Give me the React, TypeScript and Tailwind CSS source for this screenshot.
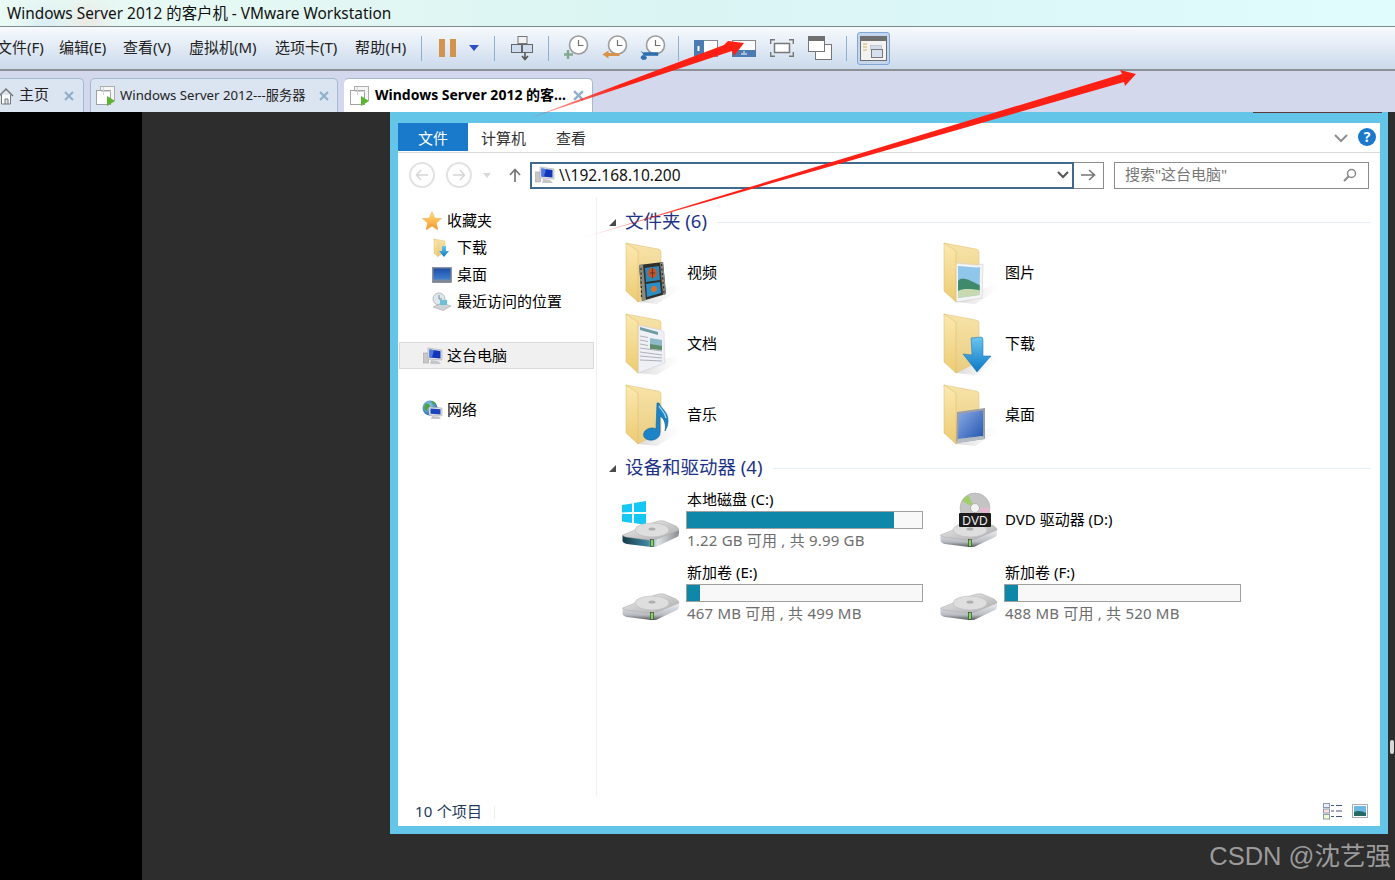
import React from "react";

const Sep = ({ ml }: { ml: string }) => <div className={`w-px h-[25px] bg-[#8fb0cf] shrink-0 ${ml}`} />;

const TabX = ({ size }: { size: number }) => (
  <svg width={size} height={size} viewBox="0 0 10 10" className="shrink-0">
    <path d="M1 1l8 8M9 1l-8 8" stroke="#8fb0cc" strokeWidth="2.200" />
  </svg>
);

function Defs() {
  return (
    <svg className="absolute w-0 h-0" aria-hidden="true">
      <defs>
        <linearGradient id="flap" x1="0" y1="0" x2="0" y2="1">
          <stop offset="0" stopColor="#fbe9b0" />
          <stop offset="1" stopColor="#eccb73" />
        </linearGradient>
        <linearGradient id="back" x1="0" y1="0" x2="0" y2="1">
          <stop offset="0" stopColor="#f7e3a8" />
          <stop offset="1" stopColor="#e9cc80" />
        </linearGradient>
        <linearGradient id="shadow" x1="0" y1="0" x2="1" y2="0">
          <stop offset="0" stopColor="#999" stopOpacity="0.55" />
          <stop offset="1" stopColor="#ccc" stopOpacity="0" />
        </linearGradient>
        <linearGradient id="silver" x1="0" y1="0" x2="1" y2="1">
          <stop offset="0" stopColor="#f2f2f2" />
          <stop offset="1" stopColor="#a8a8a8" />
        </linearGradient>
        <linearGradient id="side" x1="0" y1="0" x2="0" y2="1">
          <stop offset="0" stopColor="#eceef2" />
          <stop offset="0.7" stopColor="#b9bcc2" />
          <stop offset="1" stopColor="#55585c" />
        </linearGradient>
        <linearGradient id="sideC" x1="0" y1="0" x2="1" y2="0">
          <stop offset="0" stopColor="#173a47" />
          <stop offset="0.45" stopColor="#3f86a0" />
          <stop offset="0.62" stopColor="#dfe3e8" />
          <stop offset="1" stopColor="#8a8d90" />
        </linearGradient>
        <linearGradient id="blueArrow" x1="0" y1="0" x2="0" y2="1">
          <stop offset="0" stopColor="#6cc6ee" />
          <stop offset="1" stopColor="#0a78c6" />
        </linearGradient>
        <linearGradient id="screen" x1="0" y1="0" x2="1" y2="1">
          <stop offset="0" stopColor="#8cabe6" />
          <stop offset="1" stopColor="#2456b0" />
        </linearGradient>
        <linearGradient id="screenDark" x1="0" y1="0" x2="0" y2="1">
          <stop offset="0" stopColor="#1d4fa8" />
          <stop offset="1" stopColor="#3f7fd0" />
        </linearGradient>
        <linearGradient id="star" x1="0" y1="0" x2="0" y2="1">
          <stop offset="0" stopColor="#ffe17a" />
          <stop offset="1" stopColor="#f6962b" />
        </linearGradient>
        <linearGradient id="redA" gradientUnits="userSpaceOnUse" x1="530" y1="118" x2="620" y2="86">
          <stop offset="0" stopColor="#ff2a1c" stopOpacity="0.35" />
          <stop offset="1" stopColor="#ff2015" />
        </linearGradient>
        <linearGradient id="redB" gradientUnits="userSpaceOnUse" x1="585" y1="237" x2="700" y2="203">
          <stop offset="0" stopColor="#ff2a1c" stopOpacity="0.3" />
          <stop offset="1" stopColor="#ff2015" />
        </linearGradient>
        <radialGradient id="globe" cx="0.4" cy="0.35" r="0.7">
          <stop offset="0" stopColor="#9ad2f0" />
          <stop offset="1" stopColor="#1b6aa8" />
        </radialGradient>
      </defs>
    </svg>
  );
}

function TabIcon() {
  return (
    <svg width="21" height="21" viewBox="0 0 21 21" className="shrink-0">
      <rect x="5.5" y="1.5" width="14" height="14" fill="#f6f6f6" stroke="#aeaeae" />
      <rect x="1.5" y="5.5" width="14" height="14" fill="#fff" stroke="#a2a2a2" />
      <path d="M8.5 2v8M6 6.5h10" stroke="#d5d5d5" />
      <polygon points="12,11 20,16 12,21" fill="#5cb531" />
    </svg>
  );
}

function Clock({ badge }: { badge: "plus" | "back" | "wrench" }) {
  return (
    <svg width="26" height="26" viewBox="0 0 26 26" className="shrink-0">
      <circle cx="15.5" cy="10" r="9" fill="#fff" stroke="#9c9c9c" strokeWidth="1.6" />
      <path d="M15.5 5v5.5h5" fill="none" stroke="#6f6f6f" strokeWidth="1.2" />
      {badge === "plus" && <path d="M5 15v9M1 19.5h9" stroke="#83a98c" strokeWidth="2.4" />}
      {badge === "back" && <path d="M0.5 19.5l6-4v2.5h11v3h-11v2.5z" fill="#d8934a" />}
      {badge === "wrench" && (
        <path d="M1 16c1 1.5 2 2 3.5 1.5h13.5v3H4.5C3 20 2 20.500 1 22c-.5 2 2 3 4 2.500 1-.4 1.500-1 1.500-1.800 0-1-1-2-2.500-2" fill="#2f6fae" stroke="#2f6fae" strokeWidth="0.6" />
      )}
    </svg>
  );
}

function Folder({ children }: { children?: React.ReactNode }) {
  return (
    <svg width="60" height="71" viewBox="0 0 60 71" className="shrink-0">
      <polygon points="13,65 36,53 52,47 56,52 32,67" fill="url(#shadow)" opacity="0.7" />
      <path d="M1 6L33 12Q36 12.500 36 15V53L13 65Z" fill="url(#back)" stroke="#dcbc6c" strokeWidth="0.5" />
      {children}
      <path d="M1 6L13 14V65L1 54Z" fill="url(#flap)" stroke="#d9b868" strokeWidth="0.5" />
    </svg>
  );
}

const FilmArt = () => (
  <g>
    <polygon points="14,28 38,25 41,57 17,64" fill="#2f2f2b" />
    <polygon points="14,28 18,27.500 21,63 17,64" fill="#8b8a80" />
    <polygon points="35,25.400 38,25 41,57 38,58" fill="#8b8a80" />
    <path d="M16 31l.5 30M36.500 27l2.500 29" stroke="#2f2f2b" strokeWidth="1.200" strokeDasharray="2 2.500" fill="none" />
    <polygon points="20,31 34,29 35,43 21,45" fill="#2f86b5" />
    <polygon points="21,47 35,45 36,56 22,60" fill="#2a8fc8" />
    <ellipse cx="27.500" cy="36" rx="4.500" ry="5" fill="#c8532a" />
    <path d="M25 36h5M27.500 31v10" stroke="#3c2a20" strokeWidth="0.7" />
    <circle cx="29" cy="52" r="3" fill="#d8702c" />
  </g>
);
const DocArt = () => (
  <g>
    <polygon points="13,17 36,22 39,24 40,55 13,65" fill="#eef0f6" stroke="#c9cdd6" strokeWidth="0.5" />
    <polygon points="15,19 33,24 33,27 15,22" fill="#6f9ba3" />
    <polygon points="25,30 37,32 37,42 25,41" fill="#8fb9c8" />
    <polygon points="25,36 37,38 37,42 25,41" fill="#5f8f6a" />
    <path d="M15 28l8 1.500M15 32l8 1.500M15 36l8 1.500M15 40l22 3M15 44l22 3M15 48l22 2M15 52l22 1" stroke="#aeb1ba" strokeWidth="1" />
  </g>
);
const MusicArt = () => (
  <g>
    <path d="M32 24L34 24C36 30 43 32 43 42C43 47 41 50 40 52C41 46 40 40 35 37L35 54C35 59 29 62 24 61C19 60 17 56 20 52C23 49 28 48 31 50Z" fill="#1d84c8" stroke="#0c5e9c" strokeWidth="0.6" />
    <path d="M34 27C36 31 40 33 41 39" fill="none" stroke="#9ad6f5" strokeWidth="1.400" />
  </g>
);
const PicArt = () => (
  <g>
    <polygon points="13,26 34,28 40,27 39,61 13,65" fill="#f4f4f4" stroke="#c8c8c8" strokeWidth="0.5" />
    <polygon points="15,29 34,30.500 37,30 36.500,58 15,61" fill="#8fc6ea" />
    <path d="M15 44C20 38 27 44 36.700 48V54L15 56Z" fill="#3f8a6a" />
    <path d="M15 54C20 51 28 52 36.600 53V58L15 61Z" fill="#c7d9b0" />
  </g>
);
const ArrowArt = () => (
  <path d="M28 30L38 29Q40 29 40 32V48L48 48L34 64L20 46L29 47Z" fill="url(#blueArrow)" stroke="#0e6fb5" strokeWidth="0.5" />
);
const DeskArt = () => (
  <g>
    <polygon points="14,33 42,29 42,60 13,64" fill="#9a9ea6" />
    <polygon points="16,35 40,31.500 40,57 15,60" fill="url(#screen)" />
    <polygon points="15,60 40,57 42,60 13,64" fill="#b5bcc6" />
  </g>
);

function DriveBody({ c }: { c?: boolean }) {
  return (
    <g transform="translate(2,32)">
      <path d="M0.500 16V22Q1 24 5 25L29 28Q33 28.500 36 27L55 18Q57 17 57 14V11L31 21Z" fill={c ? "url(#sideC)" : "url(#side)"} />
      <path d="M0.500 16L33 3Q38 1 42 2L54 7Q57 9 57 11L35 20Q31 21.500 26 21L4 18Q1 17.500 0.500 16Z" fill="url(#silver)" stroke="#a9a9a9" strokeWidth="0.5" />
      <ellipse cx="30" cy="11" rx="17" ry="7" fill="#dedede" stroke="#bbb" strokeWidth="0.6" />
      <ellipse cx="30" cy="10" rx="3.500" ry="1.600" fill="#aeaeae" />
      <rect x="28.500" y="20.500" width="3" height="7" fill="#7ed957" stroke="#333" strokeWidth="0.6" />
    </g>
  );
}
const WinDrive = () => (
  <svg width="60" height="60" viewBox="0 0 60 60" className="shrink-0 self-end mb-[5px]">
    <polygon points="2,18 12,16.500 12,25 2,25.500" fill="#13c8f5" />
    <polygon points="14,16 26,14 26,25 14,25" fill="#13c8f5" />
    <polygon points="2,27 12,27 12,36 2,34.500" fill="#13c8f5" />
    <polygon points="14,27 26,27 26,38 14,36" fill="#13c8f5" />
    <DriveBody c />
  </svg>
);
const PlainDrive = () => (
  <svg width="60" height="60" viewBox="0 0 60 60" className="shrink-0 self-end mb-[5px]">
    <DriveBody />
  </svg>
);
const DvdDrive = () => (
  <svg width="60" height="60" viewBox="0 0 60 60" className="shrink-0 self-end mb-[5px]">
    <DriveBody />
    <circle cx="37" cy="21" r="15" fill="#c4c4c4" stroke="#a5a5a5" strokeWidth="0.5" />
    <path d="M37 21L24 14A15 15 0 0 1 30 8Z" fill="#9fce6a" />
    <path d="M37 21L50 29A15 15 0 0 0 52 21Z" fill="#e6b8d0" />
    <circle cx="37" cy="21" r="4.500" fill="#f2f2f2" stroke="#999" strokeWidth="0.6" />
    <rect x="21" y="26" width="32" height="14" rx="1" fill="#1b1b1b" />
    <text x="37" y="37.500" textAnchor="middle" fontSize="12" fill="#eee" fontFamily="Liberation Sans, sans-serif">DVD</text>
  </svg>
);

const Computer = () => (
  <svg width="20" height="18" viewBox="0 0 20 18" className="shrink-0">
    <rect x="0.500" y="6" width="5" height="10" fill="#c8c8c8" stroke="#999" strokeWidth="0.5" />
    <polygon points="5,1 19,3 19,13 5,12" fill="#e2e4e8" stroke="#9a9a9a" strokeWidth="0.5" />
    <polygon points="6.500,2.500 17.500,4 17.500,11.500 6.500,10.500" fill="#1336b8" />
    <polygon points="6.500,2.500 11,3 9,10.800 6.500,10.500" fill="#4f78df" />
    <path d="M8 13l7 1 3 3H7z" fill="#c4c6ca" />
  </svg>
);
const SmallFolderDl = () => (
  <svg width="18" height="20" viewBox="0 0 18 20" className="shrink-0">
    <path d="M1 1L12 3V15L5 18Z" fill="url(#back)" stroke="#d6b86e" strokeWidth="0.4" />
    <path d="M1 1L5 4V19L1 15Z" fill="url(#flap)" stroke="#d6b86e" strokeWidth="0.4" />
    <path d="M9 8h4v5h3l-5 6-5-6h3z" fill="url(#blueArrow)" />
  </svg>
);
const SmallDesk = () => (
  <svg width="20" height="16" viewBox="0 0 20 16" className="shrink-0">
    <rect x="0.500" y="0.500" width="19" height="15" fill="#7d8796" stroke="#5f6672" strokeWidth="0.5" />
    <rect x="1.500" y="1.500" width="17" height="11" fill="url(#screenDark)" />
  </svg>
);
const Recent = () => (
  <svg width="20" height="19" viewBox="0 0 20 19" className="shrink-0">
    <circle cx="7" cy="7" r="6" fill="#dfe7ea" stroke="#a5aeb3" strokeWidth="0.8" />
    <path d="M7 3v4h3" stroke="#6a8fa0" fill="none" />
    <path d="M1 15l9-4 9 3-8 4.500z" fill="#d0d2d6" stroke="#9a9a9a" strokeWidth="0.5" />
    <rect x="8" y="8" width="7" height="5" fill="#6ac2d8" />
  </svg>
);
const NetIcon = () => (
  <svg width="21" height="20" viewBox="0 0 21 20" className="shrink-0">
    <circle cx="8" cy="8" r="7.500" fill="url(#globe)" />
    <path d="M3 4c3-1 5 0 5 2s-3 2-3 4-2 1-3-2zM9 1c2 0 4 1 5 3l-3 1z" fill="#4fa24a" />
    <polygon points="7,7 20,8 20,16 7,15" fill="#e2e4e8" stroke="#9a9a9a" strokeWidth="0.5" />
    <polygon points="8.500,8.500 18.500,9.200 18.500,14.500 8.500,13.800" fill="#1c44bb" />
    <path d="M10 16l7 .5 2 2.500H9z" fill="#c4c6ca" />
  </svg>
);
const Star = () => (
  <svg width="20" height="20" viewBox="0 0 20 20" className="shrink-0">
    <polygon points="10,0.500 12.800,7 19.500,7.600 14.400,12 16,19 10,15.200 4,19 5.600,12 0.500,7.600 7.200,7" fill="url(#star)" stroke="#e9a548" strokeWidth="0.4" />
  </svg>
);

function FolderCell({ label, children }: { label: string; children?: React.ReactNode }) {
  return (
    <div className="h-[71px] flex items-center pl-[5px]">
      <Folder>{children}</Folder>
      <span className="ml-[2px] text-black">{label}</span>
    </div>
  );
}

function DriveCell({ icon, name, fill, free }: { icon: React.ReactNode; name: string; fill: string; free: string }) {
  return (
    <div className="h-[63px] flex">
      {icon}
      <div className="ml-[7px] flex flex-col">
        <div className="h-[22px] leading-[20px] text-black">{name}</div>
        <div className="-ml-px w-[237px] h-[18px] border border-[#a0a0a0] bg-[#f8f8f8]">
          <div className={`h-full bg-[#0f87a8] ${fill}`} />
        </div>
        <div className="h-[23px] leading-[22px] tracking-[0.2px] text-[#6d6d6d] whitespace-nowrap">{free}</div>
      </div>
    </div>
  );
}

function GroupHeader({ title }: { title: string }) {
  return (
    <div className="h-[30px] flex items-center pl-[12px] pr-[10px]">
      <svg width="7" height="7" viewBox="0 0 7 7" className="shrink-0">
        <polygon points="7,0 7,7 0,7" fill="#4a4a4a" />
      </svg>
      <span className="ml-[9px] -mt-[2px] text-[18.500px] text-[#1e3287] whitespace-nowrap">{title}</span>
      <div className="ml-[10px] flex-1 h-px bg-[#e2eef8]" />
    </div>
  );
}

function NavRow({ icon, label, child }: { icon: React.ReactNode; label: string; child?: boolean }) {
  return (
    <div className={`h-[27px] flex items-center ${child ? "pl-[34px]" : "pl-[24px]"}`}>
      <div className="w-[20px] flex justify-center">{icon}</div>
      <span className="ml-[5px] text-black">{label}</span>
    </div>
  );
}

export default function App() {
  return (
    <div className="relative w-[1395px] h-[880px] overflow-hidden flex flex-col bg-[#2d2d2d] text-[15px] font-['Noto_Sans','Noto_Sans_CJK_SC',sans-serif]">
      <Defs />
      {/* title bar */}
      <div className="relative h-[27px] shrink-0 flex items-center pl-[7px] border-b border-[#7f8a8c] bg-gradient-to-r from-[#eafaf4] via-[#d9f4f3] to-[#e0fcfd] text-[15.400px] text-[#111] overflow-hidden">
        <div className="absolute left-[30px] top-[16px] w-[30px] h-[12px] rounded-full bg-[#b9d3f3] blur-md" />
        <div className="absolute left-[76px] top-[14px] w-[24px] h-[12px] rounded-full bg-[#f5bcbc] blur-md" />
        <span className="relative mt-[2px] whitespace-nowrap">Windows Server 2012 的客户机 - VMware Workstation</span>
      </div>
      {/* toolbar */}
      <div className="h-[44px] shrink-0 flex items-center border-b-2 border-[#8d9196] bg-gradient-to-b from-[#f7fafd] to-[#cbdaec] text-[#222]">
        <div className="w-[421px] -ml-[3px] -mt-[2px] mr-[3px] flex shrink-0 whitespace-nowrap">
          <span className="w-[62px]">文件(F)</span>
          <span className="w-[64px]">编辑(E)</span>
          <span className="w-[66px]">查看(V)</span>
          <span className="w-[86px]">虚拟机(M)</span>
          <span className="w-[80px]">选项卡(T)</span>
          <span className="tracking-[0.3px]">帮助(H)</span>
        </div>
        <Sep ml="" />
        <div className="ml-[17px] w-[17px] h-[18px] flex justify-between shrink-0">
          <div className="w-[6px] bg-[#d4924f]" />
          <div className="w-[6px] bg-[#d4924f]" />
        </div>
        <svg width="10" height="6" viewBox="0 0 10 6" className="ml-[13px] shrink-0"><polygon points="0,0 10,0 5,6" fill="#2b4fc0" /></svg>
        <Sep ml="ml-[15px]" />
        <svg width="22" height="25" viewBox="0 0 22 25" className="ml-[16px] shrink-0">
          <rect x="7" y="0.500" width="9" height="7" fill="#f2f2f2" stroke="#777" />
          <rect x="0.500" y="8.500" width="10" height="8" fill="#cfdcf0" stroke="#666" />
          <rect x="11.500" y="8.500" width="10" height="8" fill="#cfdcf0" stroke="#666" />
          <path d="M14 17v5M11 20l3 3.500 3-3.500" stroke="#555" strokeWidth="1.600" fill="none" />
        </svg>
        <Sep ml="ml-[15px]" />
        <div className="ml-[14px] shrink-0"><Clock badge="plus" /></div>
        <div className="ml-[13px] shrink-0"><Clock badge="back" /></div>
        <div className="ml-[12px] shrink-0"><Clock badge="wrench" /></div>
        <Sep ml="ml-[12px]" />
        <svg width="24" height="17" viewBox="0 0 24 17" className="ml-[15px] shrink-0">
          <rect x="0.500" y="0.500" width="23" height="16" fill="#fff" stroke="#888" />
          <rect x="0" y="0" width="10" height="17" fill="#4b7bb0" />
          <rect x="3.500" y="6" width="2" height="5" fill="#fff" />
        </svg>
        <svg width="24" height="17" viewBox="0 0 24 17" className="ml-[14px] shrink-0">
          <rect x="0.500" y="0.500" width="23" height="16" fill="#fff" stroke="#888" />
          <rect x="0" y="10" width="24" height="7" fill="#4b7bb0" />
          <path d="M9 14h6M11 12h2" stroke="#fff" strokeWidth="1.200" />
        </svg>
        <svg width="24" height="18" viewBox="0 0 24 18" className="ml-[14px] shrink-0">
          <rect x="4.500" y="4.500" width="15" height="9" fill="#fff" stroke="#777" strokeWidth="1.500" />
          <path d="M0.700 5V0.700H5M19 0.700h4.300V5M0.700 13v4.300H5M19 17.300h4.300V13" fill="none" stroke="#777" strokeWidth="1.400" />
        </svg>
        <svg width="24" height="24" viewBox="0 0 24 24" className="ml-[14px] shrink-0">
          <rect x="7.500" y="8.500" width="16" height="15" fill="#fff" stroke="#777" />
          <rect x="0.500" y="0.500" width="16" height="15" fill="#fff" stroke="#777" />
          <rect x="0" y="0" width="17" height="5" fill="#6f6f6f" />
        </svg>
        <Sep ml="ml-[14px]" />
        <div className="ml-[10px] w-[33px] h-[33px] shrink-0 rounded-[3px] border border-[#7fa6d6] bg-[#c3d6ee] flex items-center justify-center">
          <svg width="27" height="25" viewBox="0 0 27 25">
            <rect x="0.500" y="0.500" width="26" height="24" fill="#f2f2f2" stroke="#6f6f6f" />
            <rect x="0" y="0" width="27" height="5" fill="#6f6f6f" />
            <path d="M3 8h4M3 11h4M3 14h4" stroke="#d8b65a" />
            <rect x="10.500" y="9.500" width="11" height="4" fill="#d3dcea" stroke="#aaa" strokeWidth="0.5" />
            <rect x="11.500" y="13.500" width="11" height="8" fill="#d6e0ee" stroke="#7a7a7a" />
          </svg>
        </div>
      </div>
      {/* tab bar */}
      <div className="h-[41px] shrink-0 flex items-end bg-[#d3d8ec]">
        <div className="h-[34px] w-[84px] shrink-0 flex items-center rounded-tr-[5px] border-r border-t border-[#a5b9d3] bg-[#dbe5f2]">
          <svg width="15" height="18" viewBox="0 0 15 18" className="shrink-0 -ml-[1px]">
            <path d="M0 9L7 2l7 7" fill="none" stroke="#777" strokeWidth="1.500" />
            <path d="M2.500 8v9h9V8M6 17v-5h3v5" fill="#fff" stroke="#777" />
          </svg>
          <span className="ml-[5px] -mt-[2px] text-[#222]">主页</span>
          <span className="ml-[15px]"><TabX size={10} /></span>
        </div>
        <div className="ml-[6px] h-[34px] w-[248px] shrink-0 flex items-center rounded-t-[5px] border-x border-t border-[#a5b9d3] bg-[#dbe5f2] pl-[4px]">
          <TabIcon />
          <span className="ml-[4px] text-[13.200px] text-[#222] whitespace-nowrap">Windows Server 2012---服务器</span>
          <span className="ml-auto mr-[8px]"><TabX size={10} /></span>
        </div>
        <div className="ml-[6px] h-[34px] w-[249px] shrink-0 flex items-center rounded-t-[5px] border-r border-t border-[#a5b9d3] bg-white pl-[5px]">
          <TabIcon />
          <span className="ml-[5px] -mt-[2px] text-[14px] font-bold text-black whitespace-nowrap">Windows Server 2012 的客...</span>
          <span className="ml-auto mr-[8px]"><TabX size={11} /></span>
        </div>
      </div>
      {/* desktop */}
      <div className="flex-1 min-h-0 flex">
        <div className="w-[142px] shrink-0 bg-black" />
        <div className="flex-1 pl-[248px] pr-[7px] pb-[46px] flex">
          <div className="flex-1 flex flex-col pt-[11px] px-[8px] pb-[8px] bg-[#63c6e9]">
            <div className="flex-1 flex flex-col bg-white">
              {/* ribbon */}
              <div className="h-[30px] shrink-0 flex border-b border-[#dadada] relative">
                <div className="w-[70px] h-[28px] pt-[2px] bg-[#1979ca] text-white flex items-center justify-center">文件</div>
                <span className="ml-[13px] mt-[4px] text-[#333]">计算机</span>
                <span className="ml-[30px] mt-[4px] text-[#333]">查看</span>
                <svg width="14" height="9" viewBox="0 0 14 9" className="ml-auto mt-[11px]"><path d="M1 1l6 6 6-6" fill="none" stroke="#8f8f8f" strokeWidth="2" /></svg>
                <div className="ml-[10px] mr-[4px] mt-[5px] w-[18px] h-[18px] rounded-full bg-[#1979ca] text-white text-[14px] font-bold flex items-center justify-center leading-none">?</div>
              </div>
              {/* address */}
              <div className="h-[44px] shrink-0 flex items-center">
                <div className="ml-[11px] w-[26px] h-[26px] rounded-full border-2 border-[#e2e2e2] flex items-center justify-center">
                  <svg width="14" height="12" viewBox="0 0 14 12"><path d="M13 6H2M6 1L1.500 6 6 11" fill="none" stroke="#d6d6d6" strokeWidth="1.500" /></svg>
                </div>
                <div className="ml-[11px] w-[26px] h-[26px] rounded-full border-2 border-[#e2e2e2] flex items-center justify-center">
                  <svg width="14" height="12" viewBox="0 0 14 12"><path d="M1 6h11M8 1l4.500 5L8 11" fill="none" stroke="#d6d6d6" strokeWidth="1.500" /></svg>
                </div>
                <svg width="8" height="5" viewBox="0 0 8 5" className="ml-[11px]"><polygon points="0,0 8,0 4,5" fill="#d9d9d9" /></svg>
                <svg width="12" height="14" viewBox="0 0 12 14" className="ml-[18px]"><path d="M6 14V2M1 7l5-5.500L11 7" fill="none" stroke="#777" strokeWidth="1.700" /></svg>
                <div className="ml-[9px] w-[544px] h-[27px] shrink-0 flex items-center border-2 border-[#3f6a8d] pl-[3px]">
                  <Computer />
                  <span className="ml-[4px] mt-px text-[15.500px] text-[#111]">\\192.168.10.200</span>
                  <svg width="12" height="8" viewBox="0 0 12 8" className="ml-auto mr-[3px]"><path d="M1 1l5 5 5-5" fill="none" stroke="#555" strokeWidth="2" /></svg>
                </div>
                <div className="w-[30px] h-[27px] shrink-0 flex items-center justify-center border border-l-0 border-[#8c8c8c]">
                  <svg width="15" height="12" viewBox="0 0 15 12"><path d="M0 6h13M8 1l5.500 5L8 11" fill="none" stroke="#777" strokeWidth="1.600" /></svg>
                </div>
                <div className="ml-[10px] w-[255px] h-[27px] shrink-0 flex items-center border border-[#8c8c8c] pl-[10px] text-[#777]">
                  <span className="-mt-[2px]">搜索"这台电脑"</span>
                  <svg width="14" height="14" viewBox="0 0 14 14" className="ml-auto mr-[11px]">
                    <circle cx="8.500" cy="5.500" r="4" fill="none" stroke="#888" strokeWidth="1.500" />
                    <path d="M5.500 8.500L1 13" stroke="#888" strokeWidth="2" />
                  </svg>
                </div>
              </div>
              {/* body */}
              <div className="flex-1 min-h-0 flex">
                <div className="w-[199px] shrink-0 border-r border-[#f0f0f0] pt-[10px]">
                  <NavRow icon={<Star />} label="收藏夹" />
                  <NavRow child icon={<SmallFolderDl />} label="下载" />
                  <NavRow child icon={<SmallDesk />} label="桌面" />
                  <NavRow child icon={<Recent />} label="最近访问的位置" />
                  <div className="mt-[27px] ml-px mr-[2px] h-[27px] flex items-center pl-[23px] bg-[#f0f0f0] border border-[#d9d9d9]">
                    <div className="w-[20px] flex justify-center"><Computer /></div>
                    <span className="ml-[4px] text-black">这台电脑</span>
                  </div>
                  <div className="mt-[27px]">
                    <NavRow icon={<NetIcon />} label="网络" />
                  </div>
                </div>
                <div className="flex-1 min-w-0 pt-[10px] overflow-hidden">
                  <GroupHeader title="文件夹 (6)" />
                  <div className="grid grid-cols-[318px_318px] pl-[23px]">
                    <FolderCell label="视频"><FilmArt /></FolderCell>
                    <FolderCell label="图片"><PicArt /></FolderCell>
                    <FolderCell label="文档"><DocArt /></FolderCell>
                    <FolderCell label="下载"><ArrowArt /></FolderCell>
                    <FolderCell label="音乐"><MusicArt /></FolderCell>
                    <FolderCell label="桌面"><DeskArt /></FolderCell>
                  </div>
                  <div className="mt-[3px]">
                    <GroupHeader title="设备和驱动器 (4)" />
                  </div>
                  <div className="mt-[6px] grid grid-cols-[318px_318px] gap-y-[10px] pl-[23px]">
                    <DriveCell icon={<WinDrive />} name="本地磁盘 (C:)" fill="w-[207px]" free="1.22 GB 可用 , 共 9.99 GB" />
                    <div className="h-[63px] flex items-center">
                      <DvdDrive />
                      <span className="ml-[7px] -mt-[2px] text-black">DVD 驱动器 (D:)</span>
                    </div>
                    <DriveCell icon={<PlainDrive />} name="新加卷 (E:)" fill="w-[13px]" free="467 MB 可用 , 共 499 MB" />
                    <DriveCell icon={<PlainDrive />} name="新加卷 (F:)" fill="w-[13px]" free="488 MB 可用 , 共 520 MB" />
                  </div>
                </div>
              </div>
              {/* status */}
              <div className="h-[30px] shrink-0 flex items-center pl-[17px] pr-[12px] text-[#1e395b]">
                <span className="tracking-[0.2px]">10 个项目</span>
                <div className="ml-[12px] mt-[2px] w-px h-[13px] bg-[#eeeeee]" />
                <svg width="20" height="17" viewBox="0 0 20 17" className="ml-auto">
                  <rect x="0.500" y="0.500" width="6" height="4" fill="#eef" stroke="#8a9ab0" />
                  <rect x="0.500" y="6" width="6" height="4" fill="#fdd" stroke="#8a9ab0" />
                  <rect x="0.500" y="11.500" width="6" height="4.500" fill="#efc" stroke="#8a9ab0" />
                  <path d="M8 2.500h3M13 2.500h6M8 8h3M13 8h6M8 13.500h3M13 13.500h6" stroke="#44597a" strokeWidth="1.200" />
                </svg>
                <svg width="16" height="14" viewBox="0 0 16 14" className="ml-[9px]">
                  <rect x="0.500" y="0.500" width="15" height="13" fill="#fff" stroke="#a4adb8" />
                  <rect x="2" y="2" width="12" height="10" fill="#6db8e6" />
                  <path d="M2 8c4-2 8-1 12 1v3H2z" fill="#256b62" />
                </svg>
              </div>
            </div>
          </div>
        </div>
      </div>
      {/* annotations over the page */}
      <div className="absolute left-[1253px] top-[112px] w-[129px] h-px bg-[#5a3a3a]" />
      <div className="absolute left-[1390px] top-[740px] w-[4px] h-[14px] rounded-full bg-[#d8d8d8]" />
      <svg className="absolute left-0 top-0 pointer-events-none" width="1395" height="880" viewBox="0 0 1395 880">
        <polygon points="530,118 724,45 728,41 744,43 734,56 732,51" fill="url(#redA)" />
        <polygon points="585,237 1122,74 1120,70 1136,74 1125,86 1124,82" fill="url(#redB)" />
      </svg>
      <div className="absolute right-[4px] top-[838px] text-[25.500px] leading-[36px] text-[#9b9b9b] whitespace-nowrap font-['Liberation_Sans','Noto_Sans_CJK_SC',sans-serif]">CSDN @沈艺强</div>
    </div>
  );
}
